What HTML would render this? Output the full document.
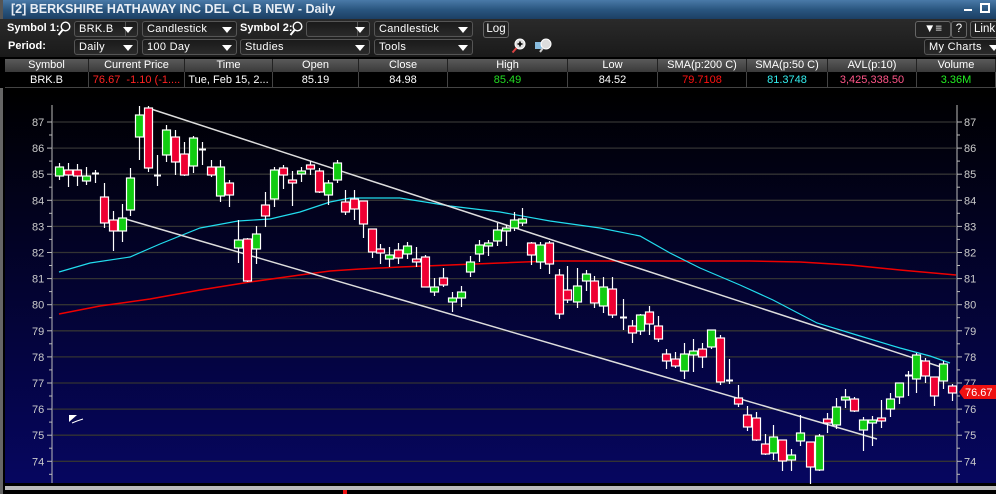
<!DOCTYPE html>
<html><head><meta charset="utf-8"><style>
*{margin:0;padding:0;box-sizing:border-box}
body{width:996px;height:494px;background:#000;overflow:hidden;font-family:"Liberation Sans",sans-serif;position:relative}
.title{position:absolute;left:0;top:0;width:996px;height:19px;background:linear-gradient(#4a7aa8,#2a5680 50%,#1c3f63);color:#e8eef5;font-weight:bold;font-size:12.5px;line-height:19px;padding-left:8px;border-left:3px solid #555}
.tb{position:absolute;left:0;top:19px;width:996px;height:38px;background:linear-gradient(#2a2a2a,#1a1a1a)}
.lbl{position:absolute;color:#fff;font-weight:bold;font-size:11px}
.dd{position:absolute;height:16px;border:1px solid #555;border-radius:3px;background:linear-gradient(#1a1a1a,#2a2a2a);color:#fff;font-size:11px;line-height:14px;padding-left:4px;letter-spacing:.3px}
.dd:after{content:"";position:absolute;right:4px;top:5px;border-left:5px solid transparent;border-right:5px solid transparent;border-top:6px solid #fff}
.sep{position:absolute;top:0;width:1px;height:14px;background:#555}
.btn{position:absolute;height:17px;border:1px solid #666;border-radius:3px;background:#222;color:#fff;font-size:11.5px;line-height:15px;text-align:center}
.th{position:absolute;top:59px;height:13px;background:linear-gradient(#5a5a5a,#3a3a3a);color:#fff;font-size:11px;line-height:13px;text-align:center;border-right:1px solid #222}
.td{position:absolute;top:72px;height:16px;background:#000;font-size:11px;line-height:16px;text-align:center;border-right:1px solid #444;border-bottom:1px solid #444;color:#fff}
</style></head><body>
<div class="title">[2] BERKSHIRE HATHAWAY INC DEL CL B NEW - Daily</div>
<div style="position:absolute;left:964px;top:9px;width:8px;height:2px;background:#fff"></div>
<div style="position:absolute;left:980px;top:3px;width:10px;height:10px;border:2px solid #fff"></div>
<div class="tb"></div>
<div class="lbl" style="left:7px;top:22px">Symbol 1:</div>
<svg style="position:absolute;left:57px;top:21px" width="14" height="16"><circle cx="8.5" cy="5.5" r="4.3" fill="none" stroke="#fff" stroke-width="1.4"/><line x1="5.5" y1="9" x2="1.5" y2="14" stroke="#fff" stroke-width="2"/></svg>
<div class="dd" style="left:74px;top:21px;width:64px">BRK.B<div class="sep" style="left:50px"></div></div>
<div class="dd" style="left:142px;top:21px;width:95px">Candlestick</div>
<div class="lbl" style="left:240px;top:22px">Symbol 2:</div>
<svg style="position:absolute;left:289px;top:21px" width="14" height="16"><circle cx="8.5" cy="5.5" r="4.3" fill="none" stroke="#fff" stroke-width="1.4"/><line x1="5.5" y1="9" x2="1.5" y2="14" stroke="#fff" stroke-width="2"/></svg>
<div class="dd" style="left:306px;top:21px;width:64px"><div class="sep" style="left:50px"></div></div>
<div class="dd" style="left:374px;top:21px;width:99px">Candlestick</div>
<div class="btn" style="left:483px;top:21px;width:26px">Log</div>
<div class="lbl" style="left:8px;top:40px">Period:</div>
<div class="dd" style="left:74px;top:39px;width:64px">Daily</div>
<div class="dd" style="left:142px;top:39px;width:95px">100 Day</div>
<div class="dd" style="left:240px;top:39px;width:130px">Studies</div>
<div class="dd" style="left:374px;top:39px;width:99px">Tools</div>
<svg style="position:absolute;left:511px;top:38px" width="16" height="16"><circle cx="9" cy="6" r="5" fill="#ddd" stroke="#fff"/><path d="M6.5,6h5M9,3.5v5" stroke="#000" stroke-width="1.6"/><line x1="5.5" y1="10" x2="1.5" y2="14.5" stroke="#d44" stroke-width="2"/></svg>
<svg style="position:absolute;left:534px;top:38px" width="20" height="16"><rect x="1" y="4" width="8" height="7" fill="#8bd"/><circle cx="12" cy="6" r="5" fill="#ddd" stroke="#fff"/><line x1="9" y1="10" x2="6" y2="14" stroke="#ccc" stroke-width="2"/></svg>
<div class="btn" style="left:915px;top:21px;width:36px">&#9660;&#8801;</div>
<div class="btn" style="left:951px;top:21px;width:16px">?</div>
<div class="btn" style="left:970px;top:21px;width:30px;text-align:left;padding-left:3px">Link</div>
<div class="dd" style="left:924px;top:39px;width:80px">My Charts</div>
<div class="th" style="left:5px;width:84px">Symbol</div>
<div class="th" style="left:89px;width:96px">Current Price</div>
<div class="th" style="left:185px;width:88px">Time</div>
<div class="th" style="left:273px;width:86px">Open</div>
<div class="th" style="left:359px;width:89px">Close</div>
<div class="th" style="left:448px;width:120px">High</div>
<div class="th" style="left:568px;width:90px">Low</div>
<div class="th" style="left:658px;width:89px">SMA(p:200 C)</div>
<div class="th" style="left:747px;width:81px">SMA(p:50 C)</div>
<div class="th" style="left:828px;width:89px">AVL(p:10)</div>
<div class="th" style="left:917px;width:79px">Volume</div>
<div class="td" style="left:5px;width:84px">BRK.B</div>
<div class="td" style="left:89px;width:96px;color:#f22">76.67 &nbsp;-1.10 (-1....</div>
<div class="td" style="left:185px;width:88px">Tue, Feb 15, 2...</div>
<div class="td" style="left:273px;width:86px">85.19</div>
<div class="td" style="left:359px;width:89px">84.98</div>
<div class="td" style="left:448px;width:120px;color:#2d2">85.49</div>
<div class="td" style="left:568px;width:90px">84.52</div>
<div class="td" style="left:658px;width:89px;color:#f11">79.7108</div>
<div class="td" style="left:747px;width:81px;color:#3ee">81.3748</div>
<div class="td" style="left:828px;width:89px;color:#f58">3,425,338.50</div>
<div class="td" style="left:917px;width:79px;color:#2e2">3.36M</div>
<div style="position:absolute;left:0;top:88px;width:3px;height:406px;background:#666"></div>
<svg id="c" style="position:absolute;left:0;top:0" width="996" height="494" xmlns="http://www.w3.org/2000/svg">
<defs><linearGradient id="g" x1="0" y1="0" x2="0" y2="1"><stop offset="0" stop-color="#000"/><stop offset="1" stop-color="#060660"/></linearGradient></defs>
<rect x="5" y="92" width="991" height="391" fill="url(#g)"/>
<rect x="5" y="486" width="991" height="4" fill="#bbb"/>
<g id="grid"></g>
<line x1="52" y1="105" x2="52" y2="483" stroke="#bbb"/>
<line x1="957" y1="105" x2="957" y2="483" stroke="#bbb"/>
<polyline fill="none" stroke="#e00" stroke-width="1.5" points="59,314 100,306 150,299 200,290 250,282 300,275 330,271 360,269 400,267 450,265 500,263 550,261 600,261 670,261 750,261 800,262 850,265 900,270 956,275"/>
<polyline fill="none" stroke="#2de" stroke-width="1.2" points="59,272 90,263 130,257 160,244 200,228 238,221 270,219 300,212 330,202 350,198 400,198 450,206 500,212 550,221 600,228 640,236 670,253 700,268 740,285 773,300 817,323 860,336 900,348 930,356 950,363"/>
<line x1="148" y1="108" x2="941" y2="367" stroke="#ddd" stroke-width="1.5"/>
<line x1="122" y1="218" x2="877" y2="439" stroke="#ddd" stroke-width="1.5"/>
<g id="cs"></g>
<g id="lab" font-family="Liberation Sans" font-size="11" fill="#ccc"></g>
<polygon points="69,415 77,415 69,422" fill="#fff"/><path d="M72,423 L77,421 L83,419" stroke="#fff" fill="none"/>
<polygon points="959,392 964,385 996,385 996,399 964,399" fill="#e11"/>
<text x="965" y="396" font-family="Liberation Sans" font-size="11" fill="#fff">76.67</text>
<rect x="343" y="490" width="4" height="4" fill="#e11"/>
</svg>
<script>
var ns="http://www.w3.org/2000/svg";
function el(p,t,a){var e=document.createElementNS(ns,t);for(var k in a)e.setAttribute(k,a[k]);p.appendChild(e);return e;}
var grid=document.getElementById('grid'),lab=document.getElementById('lab');
for(var v=87;v>=74;v--){var y=122+(87-v)*26.1;
el(grid,'line',{x1:53,y1:y,x2:956,y2:y,stroke:'#333',"stroke-width":1.3});
el(grid,'line',{x1:47,y1:y,x2:52,y2:y,stroke:'#bbb'});el(grid,'line',{x1:957,y1:y,x2:962,y2:y,stroke:'#bbb'});
el(grid,'line',{x1:49,y1:y+13,x2:52,y2:y+13,stroke:'#bbb'});el(grid,'line',{x1:957,y1:y+13,x2:960,y2:y+13,stroke:'#bbb'});
var t=el(lab,'text',{x:32,y:y+4});t.textContent=v;var t2=el(lab,'text',{x:964,y:y+4});t2.textContent=v;}
var d=[[59,167,176,163,180,1],[68,170,175,163,187,0],[77,170,176,164,186,0],[86,176,181,167,185,1],[95,173,173,170,183,2],
[104,197,223,183,228,0],[113,220,231,211,251,0],[122,218,231,204,242,1],[130,178,210,168,216,1],[139,115,137,106,160,1],[148,108,168,106,172,0],
[157,175,175,155,186,2],[166,130,155,125,162,1],[175,137,162,130,175,0],[184,154,175,142,176,0],[193,138,166,136,173,1],[202,149,149,142,165,2],
[211,167,175,160,177,0],[220,167,196,160,202,1],[229,183,195,180,207,0],[238,240,248,220,263,1],[247,239,281,238,282,0],[256,234,249,226,264,1],
[265,205,216,192,227,0],[274,170,199,167,207,1],[283,168,175,165,189,0],[292,180,183,171,206,0],[301,171,174,167,182,1],[310,165,169,161,175,0],
[319,171,192,168,193,0],[328,183,195,180,205,1],[337,163,180,160,183,1],[345,202,212,190,215,0],[354,199,209,190,220,0],[363,201,224,201,238,0],
[372,229,252,229,258,0],[380,249,253,244,264,0],[389,255,259,247,267,1],[398,250,258,243,264,0],[407,246,254,242,259,1],[416,259,262,247,267,0],
[425,257,287,255,287,0],[434,287,292,278,296,1],[443,278,285,268,287,0],[452,298,302,292,312,1],[461,292,298,286,307,1],[470,262,272,256,277,1],
[479,245,254,240,262,1],[488,243,246,240,256,1],[497,230,241,223,246,1],[506,228,230,225,246,1],[514,220,228,212,231,1],[522,219,223,208,226,1],
[531,243,255,242,265,0],[540,245,262,242,269,1],[549,243,264,241,274,0],[559,275,314,269,319,0],[567,290,300,266,303,0],[577,286,302,268,308,1],
[586,274,281,270,291,1],[594,281,303,276,308,0],[603,287,306,277,313,1],[612,289,315,277,318,0],[623,317,318,299,330,2],[632,326,333,320,343,0],
[640,315,331,314,335,1],[649,312,324,306,335,0],[658,326,339,316,342,0],[666,354,361,349,369,0],[675,359,366,352,368,0],[684,354,371,343,379,1],
[693,351,355,339,372,1],[702,349,357,343,368,0],[711,330,347,330,349,1],[720,338,382,335,385,0],[729,380,380,359,384,2],[738,398,404,385,407,0],
[747,415,427,406,431,0],[756,418,440,412,441,0],[765,444,454,434,455,0],[773,437,453,425,460,1],[782,440,461,440,471,0],[791,455,460,449,471,1],
[800,433,441,415,446,1],[810,442,467,442,484,0],[819,436,470,434,471,1],[827,419,423,413,433,0],[836,407,425,398,429,1],[845,397,399,389,408,1],
[854,399,411,397,412,0],[863,420,430,417,451,1],[872,420,422,416,446,1],[881,418,420,400,428,0],[890,399,409,393,417,1],[899,383,397,383,404,1],
[908,375,375,371,396,2],[916,355,379,353,393,1],[925,361,376,358,383,0],[934,377,396,377,406,0],[943,364,381,361,389,1],[952,386,393,384,401,0]];
var cs=document.getElementById('cs');
d.forEach(function(c){var x=c[0];
el(cs,'line',{x1:x+.5,y1:c[3],x2:x+.5,y2:c[4],stroke:'#fff',"stroke-width":1.2});
if(c[5]==2){el(cs,'line',{x1:x-3,y1:c[1]+.5,x2:x+4,y2:c[1]+.5,stroke:'#fff',"stroke-width":2});}
else el(cs,'rect',{x:x-3.5,y:c[1],width:8,height:Math.max(3,c[2]-c[1]),fill:c[5]?'#1c1':'#e03',stroke:'#fff',"stroke-width":1.2});});
</script>
</body></html>
